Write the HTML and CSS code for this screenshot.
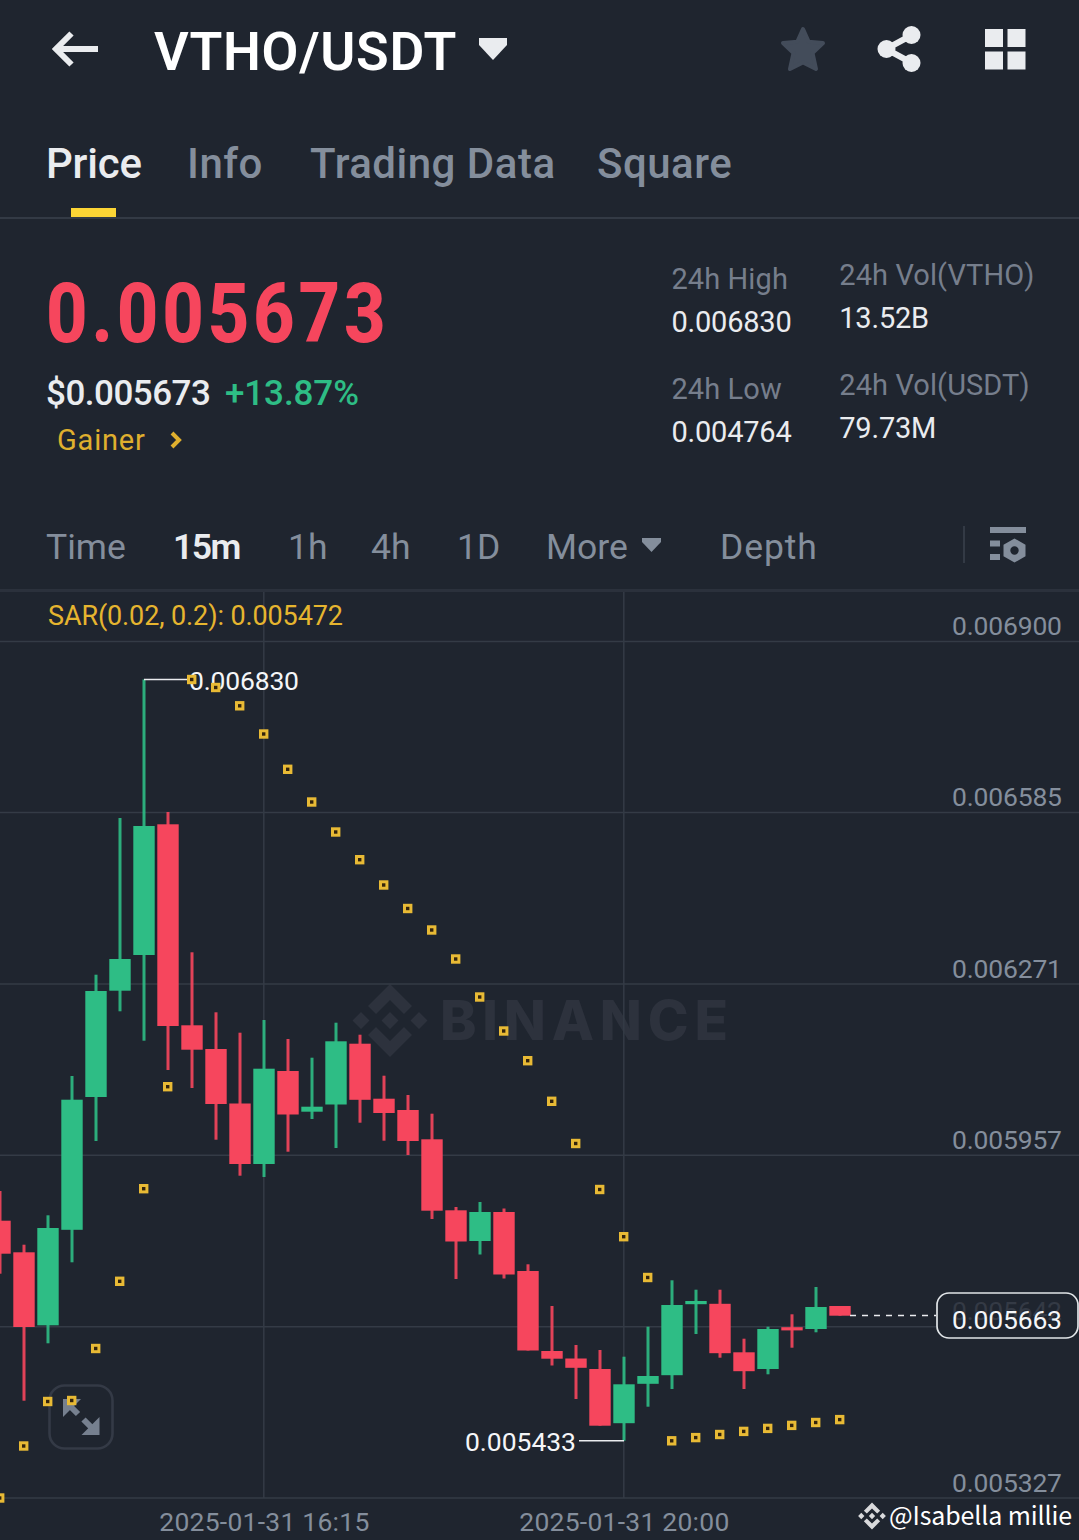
FILE: index.html
```html
<!DOCTYPE html>
<html lang="en">
  <head>
    <meta charset="UTF-8" />
    <meta name="viewport" content="width=device-width, initial-scale=1.0" />
    <title>VTHO/USDT</title>
    <link rel="stylesheet" href="styles.css">
  </head>
  <body>
    <header class="header">
      <svg class="back" width="46" height="36" viewBox="0 0 46 36">
        <path d="M19.500 2.500L4 18l15.500 15.500M4 18h42" fill="none" stroke="currentColor" stroke-width="6" />
      </svg>
      <h1>VTHO/USDT</h1>
      <svg class="caret" width="28" height="22" viewBox="0 0 28 22">
        <path d="M0 0h28v7L14 22 0 7z" fill="currentColor" />
      </svg>
      <div class="actions">
        <svg class="star" width="46" height="46" viewBox="0 0 46 46">
          <path d="M23 3l5.700 12.700 14.300 1.300-10.500 10 3.500 16-13-6.500L10 43l3.500-16L3 17l14.300-1.300z" fill="currentColor" stroke="currentColor" stroke-width="4" stroke-linejoin="round" />
        </svg>
        <svg width="44" height="46" viewBox="0 0 44 46">
          <path d="M35 9L9 23l26 14" fill="none" stroke="currentColor" stroke-width="6" />
          <circle cx="9.500" cy="23" r="9" fill="currentColor" />
          <circle cx="34.500" cy="9" r="9" fill="currentColor" />
          <circle cx="34.500" cy="37" r="9" fill="currentColor" />
        </svg>
        <svg width="41" height="41" viewBox="0 0 41 41">
          <path d="M0 0h18v18H0zM22.500 0h18v18h-18zM0 22.500h18v18H0zM22.500 22.500h18v18h-18z" fill="currentColor" />
        </svg>
      </div>
    </header>

    <nav class="tabs">
      <span class="tab active">Price</span>
      <span class="tab">Info</span>
      <span class="tab">Trading Data</span>
      <span class="tab">Square</span>
    </nav>

    <section class="summary">
      <div class="quote">
        <div class="price">0.005673</div>
        <div class="sub"><span class="usd">$0.005673</span><span class="change">+13.87%</span></div>
        <div class="tag">Gainer
          <svg width="12" height="18" viewBox="0 0 12 18">
            <path d="M2 2l7 7-7 7" fill="none" stroke="currentColor" stroke-width="4" />
          </svg>
        </div>
      </div>
      <div class="stats">
        <div class="stat"><p>24h High</p><b>0.006830</b></div>
        <div class="stat"><p>24h Low</p><b>0.004764</b></div>
      </div>
      <div class="stats volume">
        <div class="stat"><p>24h Vol(VTHO)</p><b>13.52B</b></div>
        <div class="stat"><p>24h Vol(USDT)</p><b>79.73M</b></div>
      </div>
    </section>

    <div class="intervals">
      <span>Time</span>
      <span class="active">15m</span>
      <span>1h</span>
      <span>4h</span>
      <span>1D</span>
      <span class="more">More
        <svg width="19" height="14" viewBox="0 0 19 14"><path d="M0 0h19v4L9.500 14 0 4z" fill="currentColor" /></svg>
      </span>
      <span class="depth">Depth</span>
      <i class="divider"></i>
      <svg class="settings" width="36" height="36" viewBox="0 0 36 36" fill="currentColor">
        <path d="M0 0h36v6H0zM0 13.500h10v6H0zM0 27h10v6H0z" />
        <path fill-rule="evenodd" d="M24.500 11.500l11 6.300v11.400l-11 6.300-11-6.300V17.800zM24.500 19.300a4.200 4.200 0 100 8.400 4.200 4.200 0 000-8.400z" />
      </svg>
    </div>

    <svg class="chart" width="1079" height="948" viewBox="0 592 1079 948">
      <defs>
        <g id="logo">
          <path d="M-22 -14.500L0 -36.500 22 -14.500 14 -6.500 0 -20.500 -14 -6.500zM-22 14.500L0 36.500 22 14.500 14 6.500 0 20.500 -14 6.500z" />
          <path d="M0 -8.500L8.500 0 0 8.500 -8.500 0zM-29 -8.500L-20.500 0 -29 8.500 -37.500 0zM29 -8.500L37.500 0 29 8.500 20.500 0z" />
        </g>
      </defs>
      <g class="watermark">
        <use href="#logo" x="390" y="1020.500" />
        <text x="440" y="1040" textLength="288">BINANCE</text>
      </g>
      <g id="grid"></g>
      <text class="sar-label" x="48" y="625" textLength="295">SAR(0.02, 0.2): 0.005472</text>

      <g class="expand">
        <rect x="49.500" y="1385.500" width="63" height="63" rx="15" />
        <path d="M63 1399h18l-18 18zM99.500 1435h-18l18-18z" />
        <path class="stem" d="M69 1405l9 9M93 1429l-9.500-9.500" />
      </g>

      <g id="candles"></g>
      <path class="leader" d="M144 679.500h44M579 1440.700h45" />
      <text class="mark" x="189" y="689.500" textLength="110">0.006830</text>
      <text class="mark" x="465" y="1450.500" textLength="111">0.005433</text>
      <g id="sar"></g>

      <path class="last-line" d="M850 1315.500h86" />
      <rect class="last-box" x="937" y="1293" width="141" height="45" rx="12" />
      <text class="ghost" x="952" y="1320" textLength="110">0.005642</text>
      <text class="mark" x="952" y="1328.500" textLength="110">0.005663</text>

      <g class="credit">
        <use href="#logo" transform="translate(872 1516) scale(.37)" />
        <text x="889" y="1525" textLength="183">@Isabella millie</text>
      </g>
    </svg>
    <script src="script.js"></script>
  </body>
</html>
```
FILE: styles.css
```css
* {
  margin: 0;
  padding: 0;
  box-sizing: border-box;
}
body {
  width: 1079px;
  background: #1f252f;
  color: #eaecef;
  font-family: Roboto, "Liberation Sans", sans-serif;
  overflow: hidden;
}
svg {
  display: block;
  flex: none;
}

.header {
  display: flex;
  align-items: center;
  height: 98px;
  padding: 0 53px 0 52px;
}
.header h1 {
  width: 304px;
  margin-left: 56px;
  padding-top: 4px;
  font-size: 53.5px;
  font-weight: 600;
  letter-spacing: 0.7px;
  color: #fff;
  white-space: nowrap;
}
.caret {
  margin-left: 21px;
}
.actions {
  display: flex;
  align-items: center;
  margin-left: auto;
}
.actions svg + svg {
  margin-left: 64px;
}
.actions .star {
  color: #434c5a;
}
.actions .star + svg {
  margin-left: 51px;
}

.tabs {
  display: grid;
  grid-template-columns: 141px 123px 287px auto;
  height: 121px;
  padding: 42px 0 0 46px;
  border-bottom: 2px solid #333a45;
  font-size: 42px;
  font-weight: 500;
  line-height: 48px;
  letter-spacing: 0.5px;
  color: #848e9c;
}
.tab.active {
  position: relative;
  letter-spacing: -0.2px;
  color: #eaecef;
}
.tab.active::after {
  content: "";
  position: absolute;
  left: 25px;
  bottom: 0;
  width: 45px;
  height: 9px;
  background: #fcd535;
}

.summary {
  display: flex;
  height: 284px;
  padding: 0 0 0 46px;
}
.quote {
  width: 626px;
  padding-top: 50px;
}
/* narrow digits with wide tracking */
.price {
  font-size: 83px;
  font-weight: 800;
  line-height: 90px;
  letter-spacing: 4.4px;
  color: #f6465d;
  transform: scaleX(0.87);
  transform-origin: left;
}
.sub {
  display: flex;
  margin-top: 13px;
  font-size: 35px;
  font-weight: 500;
  line-height: 43px;
  letter-spacing: -0.5px;
}
.usd {
  width: 179px;
}
.change {
  letter-spacing: -0.1px;
  color: #2ebd85;
}
.tag {
  display: flex;
  align-items: center;
  gap: 24px;
  margin-top: 7px;
  padding-left: 11px;
  font-size: 29px;
  line-height: 36px;
  letter-spacing: 0.8px;
  color: #e0b02e;
}
.stats {
  width: 168px;
  padding-top: 39px;
}
.stats.volume {
  width: 240px;
  padding-top: 35px;
}
.stat {
  margin-bottom: 24px;
  font-size: 29px;
  line-height: 43px;
  white-space: nowrap;
}
.stat p {
  letter-spacing: 0.1px;
  color: #767e8c;
}
.stat b {
  display: block;
  font-weight: 400;
  letter-spacing: -0.2px;
}

.intervals {
  display: grid;
  grid-template-columns: 127px 115px 83px 86px 89px 174px 243px 27px auto;
  align-items: center;
  height: 89px;
  padding: 1px 0 0 46px;
  border-bottom: 3px solid #2b313c;
  font-size: 35.5px;
  color: #848e9c;
}
.intervals .active {
  font-weight: 600;
  letter-spacing: -1.5px;
  color: #eaecef;
}
.more {
  display: flex;
  align-items: center;
  gap: 14px;
}
.more svg {
  margin-bottom: 3px;
}
.depth {
  letter-spacing: 0.9px;
}
.divider {
  width: 2px;
  height: 37px;
  margin-bottom: 5px;
  background: #333a45;
}
.settings {
  margin-bottom: 3px;
}

.chart text {
  font-size: 26.5px;
}
.chart .watermark {
  fill: #2d323d;
}
.chart .watermark text {
  font-family: Inter, sans-serif;
  font-size: 55px;
  font-weight: 800;
}
.grid-line {
  stroke: #343b46;
  stroke-width: 1.5;
}
.axis {
  fill: #848e9c;
}
.chart .sar-label {
  font-size: 27px;
  fill: #e6b52f;
}
.up {
  fill: #2ebd85;
}
.down {
  fill: #f6465d;
}
.wick {
  opacity: 0.9;
}
.sar-dot {
  fill: #33230c;
  stroke: #e8ba35;
  stroke-width: 3;
}
.leader,
.last-line {
  fill: none;
  stroke: #eaecef;
  stroke-width: 1.6;
}
.last-line {
  stroke-dasharray: 6 6;
}
.mark {
  fill: #f5f6f8;
}
.last-box {
  fill: #1f252f;
  stroke: #e1e5e8;
  stroke-width: 1.7;
}
.ghost {
  fill: #343a45;
}
.expand rect {
  fill: #1f252f;
  stroke: #343a46;
  stroke-width: 2.6;
}
.expand path {
  fill: #76808f;
}
.expand .stem {
  stroke: #76808f;
  stroke-width: 6;
}
.credit use {
  fill: #d9dadc;
}
.chart .credit text {
  font-family: "Noto Sans CJK SC", sans-serif;
  font-size: 25px;
  fill: #fff;
}
```
FILE: script.js
```js
const STEP = 24;

// [direction, high, low, body top, body bottom]
const candles = [
  ["down", 1191, 1273.7, 1220.7, 1253.7],
  ["down", 1244.7, 1400.7, 1252.3, 1327],
  ["up", 1215.3, 1343.3, 1228, 1325.3],
  ["up", 1076, 1262.3, 1099.7, 1229.8],
  ["up", 974.7, 1141, 991, 1097],
  ["up", 818, 1011.3, 959, 990.7],
  ["up", 679.5, 1040.7, 826, 955],
  ["down", 812, 1070, 824.3, 1026],
  ["down", 952.3, 1088, 1025.3, 1049.7],
  ["down", 1012.3, 1139.7, 1049, 1104],
  ["down", 1032.7, 1175.7, 1103.5, 1164],
  ["up", 1020, 1177, 1068.7, 1164],
  ["down", 1039, 1151.7, 1071, 1114.5],
  ["up", 1057.7, 1119, 1106.7, 1111.7],
  ["up", 1022.7, 1148, 1041.3, 1104.5],
  ["down", 1034.7, 1122.7, 1043.7, 1099.8],
  ["down", 1075.7, 1140.7, 1098.7, 1113],
  ["down", 1095, 1155, 1110, 1141],
  ["down", 1113.7, 1219, 1139.3, 1210.7],
  ["down", 1207, 1279, 1210.3, 1241.5],
  ["up", 1202, 1254.5, 1212, 1241],
  ["down", 1208.5, 1278.5, 1212, 1274.5],
  ["down", 1264.3, 1350.5, 1271, 1350.5],
  ["down", 1306, 1365.5, 1351, 1358.7],
  ["down", 1345, 1399, 1358.5, 1367.8],
  ["down", 1350, 1425.7, 1369, 1425.7],
  ["up", 1356.7, 1440.7, 1384.3, 1423.2],
  ["up", 1326.7, 1406.7, 1376, 1383.8],
  ["up", 1280.3, 1389, 1305, 1375.2],
  ["up", 1289.7, 1334, 1301, 1304.2],
  ["down", 1289.7, 1357.7, 1303.8, 1353.2],
  ["down", 1338.7, 1389, 1352.3, 1371.2],
  ["up", 1326.7, 1374.3, 1329, 1369],
  ["down", 1314.3, 1347.7, 1327.2, 1330.4],
  ["up", 1287, 1332.3, 1307, 1329],
  ["down", 1306, 1315.7, 1306, 1315.7],
];

const sar = [
  1498, 1446, 1401.5, 1400.5, 1348.5, 1281.3, 1188.7, 1086.7, 679.5,
  687.5, 705.8, 734, 769.3, 802, 832, 859.7, 885, 908.5,
  930, 959, 997, 1031, 1060.7, 1101.3, 1143.5, 1189.5, 1236.7,
  1277.5, 1440.8, 1437.6, 1434.5, 1431.4, 1428.4, 1425.4, 1422.5, 1419.6,
];

// price labels sit just above their line
const rows = [
  [641.5, "0.006900"],
  [812.5, "0.006585"],
  [984, "0.006271"],
  [1155.3, "0.005957"],
  [1326.7, ""],
  [1498, "0.005327"],
];
const cols = [
  [263.8, "2025-01-31 16:15"],
  [623.8, "2025-01-31 20:00"],
];

let grid = "";
rows.forEach(([y, label]) => {
  grid += `<path class="grid-line" d="M0 ${y}h1079" />`;
  if (label) {
    grid += `<text class="axis" x="952" y="${y - 6.2}" textLength="110">${label}</text>`;
  }
});
cols.forEach(([x, label]) => {
  grid += `<path class="grid-line" d="M${x} 592V1498" />`;
  grid += `<text class="axis" x="${x - 104.5}" y="1530.5" textLength="210">${label}</text>`;
});
document.getElementById("grid").innerHTML = grid;

document.getElementById("candles").innerHTML = candles
  .map(([dir, high, low, top, bottom], i) => {
    const x = i * STEP;
    return `<g class="${dir}">
      <rect class="wick" x="${x - 1.5}" y="${high}" width="3" height="${low - high}" />
      <rect x="${x - 10.7}" y="${top}" width="21.4" height="${bottom - top}" />
    </g>`;
  })
  .join("");

document.getElementById("sar").innerHTML = sar
  .map((y, i) => `<rect class="sar-dot" x="${i * STEP - 3.5}" y="${y - 3.2}" width="6.4" height="6.4" />`)
  .join("");
```
